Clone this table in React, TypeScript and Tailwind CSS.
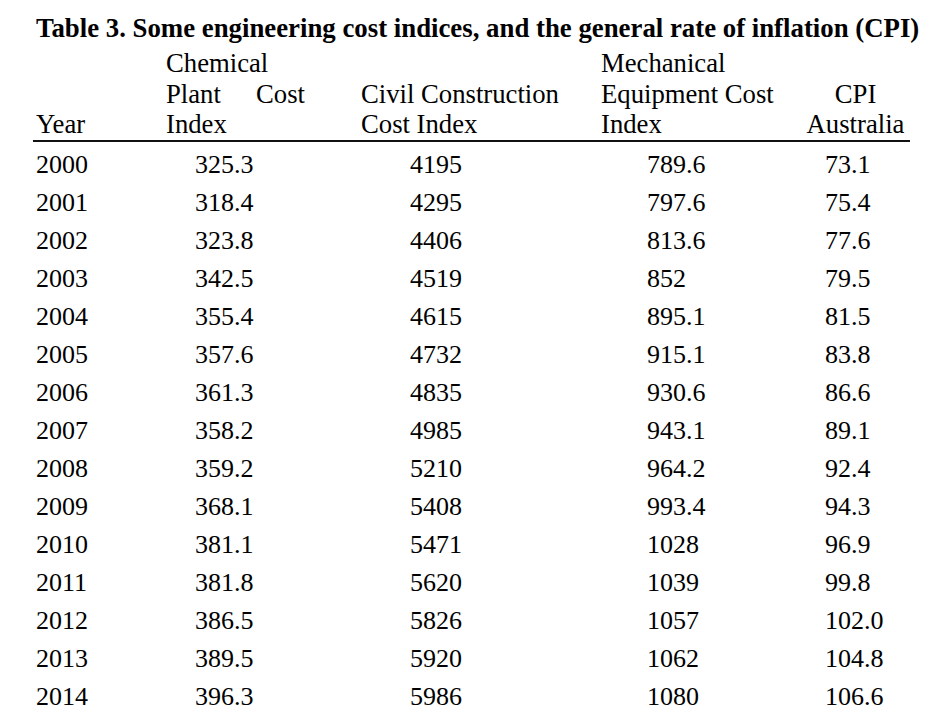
const rows: [string, string, string, string, string][] = [
  ["2000", "325.3", "4195", "789.6", "73.1"],
  ["2001", "318.4", "4295", "797.6", "75.4"],
  ["2002", "323.8", "4406", "813.6", "77.6"],
  ["2003", "342.5", "4519", "852", "79.5"],
  ["2004", "355.4", "4615", "895.1", "81.5"],
  ["2005", "357.6", "4732", "915.1", "83.8"],
  ["2006", "361.3", "4835", "930.6", "86.6"],
  ["2007", "358.2", "4985", "943.1", "89.1"],
  ["2008", "359.2", "5210", "964.2", "92.4"],
  ["2009", "368.1", "5408", "993.4", "94.3"],
  ["2010", "381.1", "5471", "1028", "96.9"],
  ["2011", "381.8", "5620", "1039", "99.8"],
  ["2012", "386.5", "5826", "1057", "102.0"],
  ["2013", "389.5", "5920", "1062", "104.8"],
  ["2014", "396.3", "5986", "1080", "106.6"],
];

const cols = "grid grid-cols-[133px_195px_240px_200px_109px]";

export default function App() {
  return (
    <div className="w-[952px] h-[728px] overflow-hidden bg-white text-black pl-[33px] font-['Liberation_Serif','Times_New_Roman',serif]">
      <h1 className="pt-[13px] pl-[3px] text-[26.8px] leading-[30px] font-bold whitespace-nowrap">
        Table 3. Some engineering cost indices, and the general rate of inflation (CPI)
      </h1>

      <div className={`${cols} mt-[5px] w-[877px] text-[26.7px] leading-[30.5px] border-b-2 border-[#111]`}>
        <div className="pl-[3px] flex flex-col justify-end">Year</div>
        <div className="w-[139px] flex flex-col">
          <span>Chemical</span>
          <span className="flex justify-between">
            <span>Plant</span>
            <span>Cost</span>
          </span>
          <span>Index</span>
        </div>
        <div className="flex flex-col justify-end">
          <span>Civil Construction</span>
          <span>Cost Index</span>
        </div>
        <div className="flex flex-col">
          <span>Mechanical</span>
          <span>Equipment Cost</span>
          <span>Index</span>
        </div>
        <div className="flex flex-col justify-end items-center">
          <span>CPI</span>
          <span>Australia</span>
        </div>
      </div>

      <div className="pt-[4px] w-[877px] text-[26px] leading-[38px]">
        {rows.map((r) => (
          <div key={r[0]} className={cols}>
            <div className="pl-[3px]">{r[0]}</div>
            <div className="pl-[29px]">{r[1]}</div>
            <div className="pl-[49px]">{r[2]}</div>
            <div className="pl-[46px]">{r[3]}</div>
            <div className="pl-[24px]">{r[4]}</div>
          </div>
        ))}
      </div>
    </div>
  );
}
